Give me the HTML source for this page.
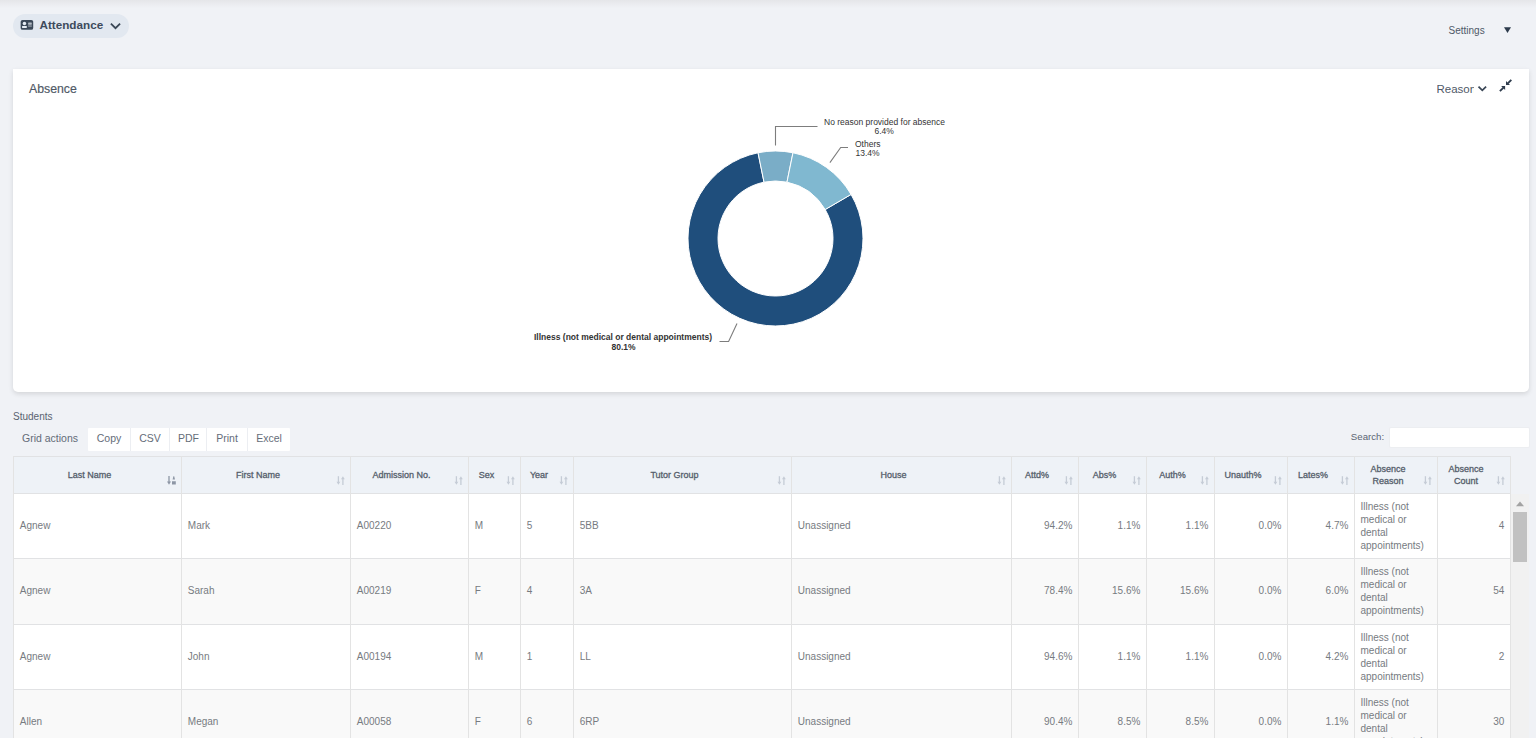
<!DOCTYPE html>
<html><head><meta charset="utf-8">
<style>
*{margin:0;padding:0;box-sizing:border-box}
html,body{width:1536px;height:738px;overflow:hidden;background:#f0f2f6;font-family:"Liberation Sans",sans-serif}
.abs{position:absolute;white-space:nowrap}
#topshade{position:absolute;left:0;top:0;width:1536px;height:8px;background:linear-gradient(#e5e6e9,#f0f2f6)}
#pill{position:absolute;left:13px;top:14px;width:116px;height:24px;border-radius:12px;background:#e2e8f0}
#card{position:absolute;left:13px;top:69px;width:1516px;height:323.3px;background:#fff;border-radius:0 0 5px 5px;box-shadow:0 2px 5px rgba(0,0,0,.12)}
.t{position:absolute;white-space:nowrap;line-height:1}
.btns{position:absolute;left:88px;top:427.5px;height:23px;background:#fff;border-radius:1px}
.btn{position:absolute;top:-0.3px;height:23px;font-size:10.5px;color:#656d79;text-align:center;line-height:23px}
.sep{position:absolute;top:0;width:1px;height:23px;background:#eceef2}
#grid{position:absolute;left:13px;top:456px;width:1498px;height:282px;overflow:hidden;background:#fff}
.hl{position:absolute;height:1px;background:#e1e2e4}
.vl{position:absolute;width:1px;background:#e3e3e3}
.hd{position:absolute;font-size:9px;color:#555e6b;-webkit-text-stroke:0.3px #555e6b;text-align:center;line-height:12px}
.cell{position:absolute;font-size:10px;color:#777b81;line-height:13.1px;white-space:nowrap}
</style></head><body>
<div id="topshade"></div>
<div id="pill"></div>

<svg class="abs" style="left:20px;top:19px" width="14" height="12" viewBox="0 0 14 12"><rect x="0.65" y="0.9" width="12.55" height="9.9" rx="1.9" fill="#3b4858"/><circle cx="4.45" cy="4.5" r="1.75" fill="#e6edf4"/><rect x="2" y="7" width="4.9" height="1.9" rx="0.6" fill="#e6edf4"/><rect x="8.1" y="3.5" width="3.7" height="2.2" rx="0.4" fill="#b4bcc5"/><rect x="8.1" y="6.4" width="3.7" height="1.3" fill="#98a2ad"/></svg>
<div class="t" style="left:39.5px;top:19.2px;font-size:11.7px;font-weight:bold;color:#3e4b5c">Attendance</div>
<svg class="abs" style="left:109px;top:21px" width="14" height="10" viewBox="0 0 14 10"><path d="M1.9,2.7 L6.5,7.2 L11.1,2.7" fill="none" stroke="#3a4756" stroke-width="1.8"/></svg>
<div class="t" style="left:1448.5px;top:25.8px;font-size:10px;color:#4f5968">Settings</div>
<svg class="abs" style="left:1503px;top:26px" width="9" height="8" viewBox="0 0 9 8"><path d="M1,1.2 H8 L4.5,7 Z" fill="#2d3b4c"/></svg>
<div id="card"></div>
<div class="t" style="left:29px;top:83.3px;font-size:12.3px;color:#4f5966;-webkit-text-stroke:0.15px #4f5966">Absence</div>
<div class="t" style="left:1436.5px;top:84px;font-size:11.5px;color:#4f5968;width:37.5px;overflow:hidden">Reason</div>
<svg class="abs" style="left:1477px;top:85px" width="11" height="8" viewBox="0 0 11 8"><path d="M1.5,1.6 L5.3,5.3 L9.1,1.6" fill="none" stroke="#3a4756" stroke-width="1.75"/></svg>
<svg class="abs" style="left:1498px;top:79px" width="15" height="14" viewBox="0 0 15 14"><path d="M1.9,12.2 L5.5,8.6" stroke="#2f3c4d" stroke-width="1.9"/><path d="M3.1,6.9 H7.1 V10.9 Z" fill="#2f3c4d"/><path d="M13.3,0.9 L9.8,4.4" stroke="#2f3c4d" stroke-width="1.9"/><path d="M8,1.9 V5.9 H12 Z" fill="#2f3c4d"/></svg>
<svg class="abs" style="left:0;top:0" width="1536" height="738" viewBox="0 0 1536 738"><path d="M851.09,194.43 A87.5,87.5 0 1 1 758.03,152.76 L764.02,182.16 A57.5,57.5 0 1 0 825.18,209.54 Z" fill="#1f4e7c" stroke="#fff" stroke-width="1" stroke-linejoin="round"/><path d="M758.03,152.76 A87.5,87.5 0 0 1 792.97,152.76 L786.98,182.16 A57.5,57.5 0 0 0 764.02,182.16 Z" fill="#7aadc7" stroke="#fff" stroke-width="1" stroke-linejoin="round"/><path d="M792.97,152.76 A87.5,87.5 0 0 1 851.09,194.43 L825.18,209.54 A57.5,57.5 0 0 0 786.98,182.16 Z" fill="#80b8d0" stroke="#fff" stroke-width="1" stroke-linejoin="round"/><path d="M775.5,145.5 V126.5 H817.5" fill="none" stroke="#7d7d7d" stroke-width="1.1"/><path d="M829.9,162.6 L840.7,147.5 H848" fill="none" stroke="#7d7d7d" stroke-width="1.1"/><path d="M737,323.5 L728.6,341.5 H719.5" fill="none" stroke="#7d7d7d" stroke-width="1.1"/></svg>
<div class="t" style="left:824px;top:117.5px;font-size:8.5px;color:#333">No reason provided for absence</div>
<div class="t" style="left:874.5px;top:127px;font-size:8.5px;color:#333">6.4%</div>
<div class="t" style="left:855px;top:139.8px;font-size:8.5px;color:#333">Others</div>
<div class="t" style="left:855.5px;top:149px;font-size:8.5px;color:#333">13.4%</div>
<div class="t" style="left:534px;top:333.2px;font-size:8.5px;font-weight:bold;color:#333">Illness (not medical or dental appointments)</div>
<div class="t" style="left:611.5px;top:342.5px;font-size:8.5px;font-weight:bold;color:#333">80.1%</div>
<div class="t" style="left:13px;top:412.3px;font-size:10px;color:#596270">Students</div>
<div class="t" style="left:22px;top:433.4px;font-size:10.5px;color:#636b78">Grid actions</div>
<div class="btns" style="width:202px">
<div class="btn" style="left:0px;width:42px">Copy</div>
<div class="btn" style="left:43px;width:38px">CSV</div>
<div class="sep" style="left:42px"></div>
<div class="btn" style="left:82px;width:37px">PDF</div>
<div class="sep" style="left:81px"></div>
<div class="btn" style="left:119px;width:40px">Print</div>
<div class="sep" style="left:118px"></div>
<div class="btn" style="left:160px;width:42px">Excel</div>
<div class="sep" style="left:159px"></div>
</div>
<div class="t" style="left:1350.8px;top:431.6px;font-size:9.7px;color:#5b6573">Search:</div>
<div class="abs" style="left:1389.5px;top:428px;width:139px;height:19px;background:#fff;border-radius:1px;box-shadow:0 0 0 1px #eceef1"></div>
<div id="grid"><div class="abs" style="left:0px;top:0;width:1498px;height:37px;background:#eef2f7"></div><div class="abs" style="left:0;top:102px;width:1498px;height:66px;background:#f9f9f9"></div><div class="abs" style="left:0;top:233px;width:1498px;height:66px;background:#f9f9f9"></div><div class="hl" style="left:0;top:0px;width:1498px"></div><div class="hl" style="left:0;top:37px;width:1498px"></div><div class="hl" style="left:0;top:102px;width:1498px"></div><div class="hl" style="left:0;top:168px;width:1498px"></div><div class="hl" style="left:0;top:233px;width:1498px"></div><div class="hl" style="left:0;top:299px;width:1498px"></div><div class="vl" style="left:0px;top:0;height:282px"></div><div class="vl" style="left:168px;top:0;height:282px"></div><div class="vl" style="left:337px;top:0;height:282px"></div><div class="vl" style="left:455px;top:0;height:282px"></div><div class="vl" style="left:507px;top:0;height:282px"></div><div class="vl" style="left:560px;top:0;height:282px"></div><div class="vl" style="left:778px;top:0;height:282px"></div><div class="vl" style="left:998px;top:0;height:282px"></div><div class="vl" style="left:1065px;top:0;height:282px"></div><div class="vl" style="left:1133px;top:0;height:282px"></div><div class="vl" style="left:1201px;top:0;height:282px"></div><div class="vl" style="left:1274px;top:0;height:282px"></div><div class="vl" style="left:1341px;top:0;height:282px"></div><div class="vl" style="left:1424px;top:0;height:282px"></div><div class="vl" style="left:1497px;top:0;height:282px"></div><div class="hd" style="left:7px;width:139px;top:13.199999999999989px">Last Name</div><svg class="abs" style="left:153.7px;top:20px" width="9" height="9" viewBox="0 0 9 9"><path d="M2,0 V6.5" stroke="#8d96a5" stroke-width="1.3"/><path d="M0,5.6 H4 L2,8.7 Z" fill="#8d96a5"/><path d="M5.6,3.4 L6.4,0.2 H7.2 L8,3.4 Z M5,8.6 V5.2 H8.8 V8.6 Z" fill="#8d96a5"/></svg><div class="hd" style="left:175px;width:140px;top:13.199999999999989px">First Name</div><svg class="abs" style="left:322.7px;top:20px" width="10" height="9" viewBox="0 0 10 9"><path d="M2.4,0.2 V6.3" stroke="#c5ccd6" stroke-width="1.3"/><path d="M0.5,5.7 H4.3 L2.4,8.8 Z" fill="#c5ccd6"/><path d="M6.9,2.7 V8.9" stroke="#c5ccd6" stroke-width="1.3"/><path d="M5,3.3 H8.8 L6.9,0.2 Z" fill="#c5ccd6"/></svg><div class="hd" style="left:344px;width:89px;top:13.199999999999989px">Admission No.</div><svg class="abs" style="left:440.7px;top:20px" width="10" height="9" viewBox="0 0 10 9"><path d="M2.4,0.2 V6.3" stroke="#c5ccd6" stroke-width="1.3"/><path d="M0.5,5.7 H4.3 L2.4,8.8 Z" fill="#c5ccd6"/><path d="M6.9,2.7 V8.9" stroke="#c5ccd6" stroke-width="1.3"/><path d="M5,3.3 H8.8 L6.9,0.2 Z" fill="#c5ccd6"/></svg><div class="hd" style="left:462px;width:23px;top:13.199999999999989px">Sex</div><svg class="abs" style="left:492.7px;top:20px" width="10" height="9" viewBox="0 0 10 9"><path d="M2.4,0.2 V6.3" stroke="#c5ccd6" stroke-width="1.3"/><path d="M0.5,5.7 H4.3 L2.4,8.8 Z" fill="#c5ccd6"/><path d="M6.9,2.7 V8.9" stroke="#c5ccd6" stroke-width="1.3"/><path d="M5,3.3 H8.8 L6.9,0.2 Z" fill="#c5ccd6"/></svg><div class="hd" style="left:514px;width:24px;top:13.199999999999989px">Year</div><svg class="abs" style="left:545.7px;top:20px" width="10" height="9" viewBox="0 0 10 9"><path d="M2.4,0.2 V6.3" stroke="#c5ccd6" stroke-width="1.3"/><path d="M0.5,5.7 H4.3 L2.4,8.8 Z" fill="#c5ccd6"/><path d="M6.9,2.7 V8.9" stroke="#c5ccd6" stroke-width="1.3"/><path d="M5,3.3 H8.8 L6.9,0.2 Z" fill="#c5ccd6"/></svg><div class="hd" style="left:567px;width:189px;top:13.199999999999989px">Tutor Group</div><svg class="abs" style="left:763.7px;top:20px" width="10" height="9" viewBox="0 0 10 9"><path d="M2.4,0.2 V6.3" stroke="#c5ccd6" stroke-width="1.3"/><path d="M0.5,5.7 H4.3 L2.4,8.8 Z" fill="#c5ccd6"/><path d="M6.9,2.7 V8.9" stroke="#c5ccd6" stroke-width="1.3"/><path d="M5,3.3 H8.8 L6.9,0.2 Z" fill="#c5ccd6"/></svg><div class="hd" style="left:785px;width:191px;top:13.199999999999989px">House</div><svg class="abs" style="left:983.7px;top:20px" width="10" height="9" viewBox="0 0 10 9"><path d="M2.4,0.2 V6.3" stroke="#c5ccd6" stroke-width="1.3"/><path d="M0.5,5.7 H4.3 L2.4,8.8 Z" fill="#c5ccd6"/><path d="M6.9,2.7 V8.9" stroke="#c5ccd6" stroke-width="1.3"/><path d="M5,3.3 H8.8 L6.9,0.2 Z" fill="#c5ccd6"/></svg><div class="hd" style="left:1005px;width:38px;top:13.199999999999989px">Attd%</div><svg class="abs" style="left:1050.7px;top:20px" width="10" height="9" viewBox="0 0 10 9"><path d="M2.4,0.2 V6.3" stroke="#c5ccd6" stroke-width="1.3"/><path d="M0.5,5.7 H4.3 L2.4,8.8 Z" fill="#c5ccd6"/><path d="M6.9,2.7 V8.9" stroke="#c5ccd6" stroke-width="1.3"/><path d="M5,3.3 H8.8 L6.9,0.2 Z" fill="#c5ccd6"/></svg><div class="hd" style="left:1072px;width:39px;top:13.199999999999989px">Abs%</div><svg class="abs" style="left:1118.7px;top:20px" width="10" height="9" viewBox="0 0 10 9"><path d="M2.4,0.2 V6.3" stroke="#c5ccd6" stroke-width="1.3"/><path d="M0.5,5.7 H4.3 L2.4,8.8 Z" fill="#c5ccd6"/><path d="M6.9,2.7 V8.9" stroke="#c5ccd6" stroke-width="1.3"/><path d="M5,3.3 H8.8 L6.9,0.2 Z" fill="#c5ccd6"/></svg><div class="hd" style="left:1140px;width:39px;top:13.199999999999989px">Auth%</div><svg class="abs" style="left:1186.7px;top:20px" width="10" height="9" viewBox="0 0 10 9"><path d="M2.4,0.2 V6.3" stroke="#c5ccd6" stroke-width="1.3"/><path d="M0.5,5.7 H4.3 L2.4,8.8 Z" fill="#c5ccd6"/><path d="M6.9,2.7 V8.9" stroke="#c5ccd6" stroke-width="1.3"/><path d="M5,3.3 H8.8 L6.9,0.2 Z" fill="#c5ccd6"/></svg><div class="hd" style="left:1208px;width:44px;top:13.199999999999989px">Unauth%</div><svg class="abs" style="left:1259.7px;top:20px" width="10" height="9" viewBox="0 0 10 9"><path d="M2.4,0.2 V6.3" stroke="#c5ccd6" stroke-width="1.3"/><path d="M0.5,5.7 H4.3 L2.4,8.8 Z" fill="#c5ccd6"/><path d="M6.9,2.7 V8.9" stroke="#c5ccd6" stroke-width="1.3"/><path d="M5,3.3 H8.8 L6.9,0.2 Z" fill="#c5ccd6"/></svg><div class="hd" style="left:1281px;width:38px;top:13.199999999999989px">Lates%</div><svg class="abs" style="left:1326.7px;top:20px" width="10" height="9" viewBox="0 0 10 9"><path d="M2.4,0.2 V6.3" stroke="#c5ccd6" stroke-width="1.3"/><path d="M0.5,5.7 H4.3 L2.4,8.8 Z" fill="#c5ccd6"/><path d="M6.9,2.7 V8.9" stroke="#c5ccd6" stroke-width="1.3"/><path d="M5,3.3 H8.8 L6.9,0.2 Z" fill="#c5ccd6"/></svg><div class="hd" style="left:1348px;width:54px;top:6.899999999999977px">Absence<br>Reason</div><svg class="abs" style="left:1409.7px;top:20px" width="10" height="9" viewBox="0 0 10 9"><path d="M2.4,0.2 V6.3" stroke="#c5ccd6" stroke-width="1.3"/><path d="M0.5,5.7 H4.3 L2.4,8.8 Z" fill="#c5ccd6"/><path d="M6.9,2.7 V8.9" stroke="#c5ccd6" stroke-width="1.3"/><path d="M5,3.3 H8.8 L6.9,0.2 Z" fill="#c5ccd6"/></svg><div class="hd" style="left:1431px;width:44px;top:6.899999999999977px">Absence<br>Count</div><svg class="abs" style="left:1482.7px;top:20px" width="10" height="9" viewBox="0 0 10 9"><path d="M2.4,0.2 V6.3" stroke="#c5ccd6" stroke-width="1.3"/><path d="M0.5,5.7 H4.3 L2.4,8.8 Z" fill="#c5ccd6"/><path d="M6.9,2.7 V8.9" stroke="#c5ccd6" stroke-width="1.3"/><path d="M5,3.3 H8.8 L6.9,0.2 Z" fill="#c5ccd6"/></svg><div class="cell" style="left:6.800000000000001px;top:63px">Agnew</div><div class="cell" style="left:174.8px;top:63px">Mark</div><div class="cell" style="left:343.8px;top:63px">A00220</div><div class="cell" style="left:461.8px;top:63px">M</div><div class="cell" style="left:513.8px;top:63px">5</div><div class="cell" style="left:566.8px;top:63px">5BB</div><div class="cell" style="left:784.8px;top:63px">Unassigned</div><div class="cell" style="left:998px;width:61.4px;text-align:right;top:63px">94.2%</div><div class="cell" style="left:1065px;width:62.4px;text-align:right;top:63px">1.1%</div><div class="cell" style="left:1133px;width:62.4px;text-align:right;top:63px">1.1%</div><div class="cell" style="left:1201px;width:67.4px;text-align:right;top:63px">0.0%</div><div class="cell" style="left:1274px;width:61.4px;text-align:right;top:63px">4.7%</div><div class="cell" style="left:1347.5px;top:43.5px">Illness (not<br>medical or<br>dental<br>appointments)</div><div class="cell" style="left:1424px;width:67.4px;text-align:right;top:63px">4</div><div class="cell" style="left:6.800000000000001px;top:128px">Agnew</div><div class="cell" style="left:174.8px;top:128px">Sarah</div><div class="cell" style="left:343.8px;top:128px">A00219</div><div class="cell" style="left:461.8px;top:128px">F</div><div class="cell" style="left:513.8px;top:128px">4</div><div class="cell" style="left:566.8px;top:128px">3A</div><div class="cell" style="left:784.8px;top:128px">Unassigned</div><div class="cell" style="left:998px;width:61.4px;text-align:right;top:128px">78.4%</div><div class="cell" style="left:1065px;width:62.4px;text-align:right;top:128px">15.6%</div><div class="cell" style="left:1133px;width:62.4px;text-align:right;top:128px">15.6%</div><div class="cell" style="left:1201px;width:67.4px;text-align:right;top:128px">0.0%</div><div class="cell" style="left:1274px;width:61.4px;text-align:right;top:128px">6.0%</div><div class="cell" style="left:1347.5px;top:108.5px">Illness (not<br>medical or<br>dental<br>appointments)</div><div class="cell" style="left:1424px;width:67.4px;text-align:right;top:128px">54</div><div class="cell" style="left:6.800000000000001px;top:194px">Agnew</div><div class="cell" style="left:174.8px;top:194px">John</div><div class="cell" style="left:343.8px;top:194px">A00194</div><div class="cell" style="left:461.8px;top:194px">M</div><div class="cell" style="left:513.8px;top:194px">1</div><div class="cell" style="left:566.8px;top:194px">LL</div><div class="cell" style="left:784.8px;top:194px">Unassigned</div><div class="cell" style="left:998px;width:61.4px;text-align:right;top:194px">94.6%</div><div class="cell" style="left:1065px;width:62.4px;text-align:right;top:194px">1.1%</div><div class="cell" style="left:1133px;width:62.4px;text-align:right;top:194px">1.1%</div><div class="cell" style="left:1201px;width:67.4px;text-align:right;top:194px">0.0%</div><div class="cell" style="left:1274px;width:61.4px;text-align:right;top:194px">4.2%</div><div class="cell" style="left:1347.5px;top:174.5px">Illness (not<br>medical or<br>dental<br>appointments)</div><div class="cell" style="left:1424px;width:67.4px;text-align:right;top:194px">2</div><div class="cell" style="left:6.800000000000001px;top:259px">Allen</div><div class="cell" style="left:174.8px;top:259px">Megan</div><div class="cell" style="left:343.8px;top:259px">A00058</div><div class="cell" style="left:461.8px;top:259px">F</div><div class="cell" style="left:513.8px;top:259px">6</div><div class="cell" style="left:566.8px;top:259px">6RP</div><div class="cell" style="left:784.8px;top:259px">Unassigned</div><div class="cell" style="left:998px;width:61.4px;text-align:right;top:259px">90.4%</div><div class="cell" style="left:1065px;width:62.4px;text-align:right;top:259px">8.5%</div><div class="cell" style="left:1133px;width:62.4px;text-align:right;top:259px">8.5%</div><div class="cell" style="left:1201px;width:67.4px;text-align:right;top:259px">0.0%</div><div class="cell" style="left:1274px;width:61.4px;text-align:right;top:259px">1.1%</div><div class="cell" style="left:1347.5px;top:239.5px">Illness (not<br>medical or<br>dental<br>appointments)</div><div class="cell" style="left:1424px;width:67.4px;text-align:right;top:259px">30</div></div>
<div class="abs" style="left:1511px;top:494px;width:18px;height:244px;background:#f1f1f1"></div>
<svg class="abs" style="left:1515px;top:500px" width="10" height="8" viewBox="0 0 10 8"><path d="M1,6.2 H9 L5,1.4 Z" fill="#a3a3a3"/></svg>
<div class="abs" style="left:1513px;top:512px;width:14px;height:49.8px;background:#c1c1c1"></div>
</body></html>
